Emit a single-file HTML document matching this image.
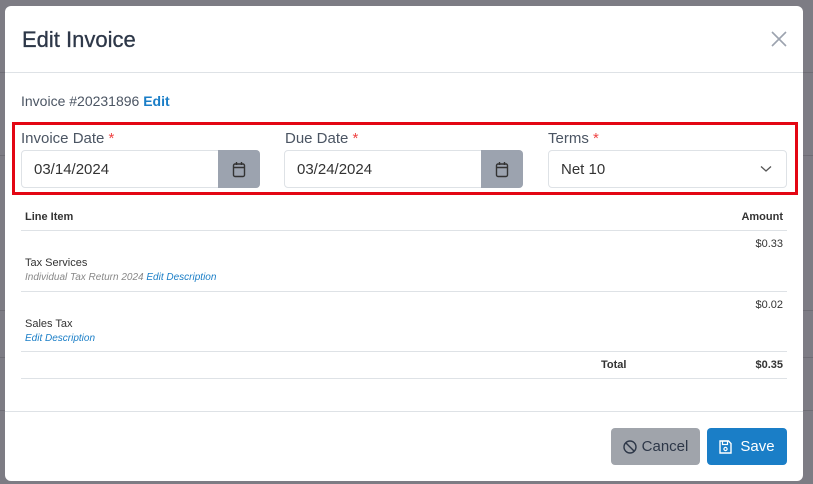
<!DOCTYPE html><html><head><style>
*{box-sizing:border-box;margin:0;padding:0}
body{width:813px;height:484px;background:#7d7c84;font-family:"Liberation Sans",sans-serif;position:relative;overflow:hidden;color:#333}
.bgl{position:absolute;left:0;right:0;height:1px;background:#6e6d75}
.m{position:absolute;left:5px;top:6px;width:798px;height:475px;background:#fff;border-radius:6px}
.a{position:absolute}
.lbl{font-size:15px;color:#4b5563}
.lbl b{color:#ef4444;font-weight:normal}
.in{position:absolute;top:144px;height:38px;border:1px solid #dee2e6;border-radius:4px;font-size:15px;color:#333;padding:10px 12px;background:#fff}
.cal{position:absolute;right:-1px;top:-1px;width:42px;height:38px;background:#9ca3af;border-radius:0 4px 4px 0;display:flex;align-items:center;justify-content:center}
.hr{position:absolute;left:16px;width:766px;height:1px;background:#dee2e6}
.s{font-size:11px}
.bl{color:#1a7ec7}
</style></head><body>
<div class="bgl" style="top:72px"></div><div class="bgl" style="top:155px"></div><div class="bgl" style="top:310px"></div><div class="bgl" style="top:357px"></div><div class="bgl" style="top:410px"></div>
<div class="m">
<div class="a" style="left:17px;top:21px;font-size:22px;color:#2d3748;-webkit-text-stroke:0.3px #2d3748">Edit Invoice</div>
<svg class="a" style="left:765px;top:24px" width="18" height="18" viewBox="0 0 18 18"><path d="M2 2L16 16M16 2L2 16" stroke="#9ca3af" stroke-width="1.6"/></svg>
<div class="a" style="left:0;right:0;top:66px;height:1px;background:#dee2e6"></div>
<div class="a" style="left:16px;top:87px;font-size:14px;color:#4b5563">Invoice #20231896 <span class="bl" style="font-weight:bold">Edit</span></div>
<div class="a" style="left:7px;top:116px;width:786px;height:73px;border:3px solid #e30613"></div>
<div class="a lbl" style="left:16px;top:124px">Invoice Date <b>*</b></div>
<div class="a lbl" style="left:280px;top:124px">Due Date <b>*</b></div>
<div class="a lbl" style="left:543px;top:124px">Terms <b>*</b></div>
<div class="in" style="left:16px;width:239px">03/14/2024<div class="cal"><svg width="14" height="17" viewBox="0 0 14 17"><rect x="1.5" y="3" width="11" height="12.5" rx="1.5" fill="none" stroke="#333" stroke-width="1.4"/><path d="M1.5 6.5H12.5M4.5 1V4M9.5 1V4" stroke="#333" stroke-width="1.4"/></svg></div></div>
<div class="in" style="left:279px;width:239px">03/24/2024<div class="cal"><svg width="14" height="17" viewBox="0 0 14 17"><rect x="1.5" y="3" width="11" height="12.5" rx="1.5" fill="none" stroke="#333" stroke-width="1.4"/><path d="M1.5 6.5H12.5M4.5 1V4M9.5 1V4" stroke="#333" stroke-width="1.4"/></svg></div></div>
<div class="in" style="left:543px;width:239px">Net 10<svg class="a" style="right:14px;top:14px" width="12" height="8" viewBox="0 0 12 8"><path d="M1 1.5L6 6L11 1.5" fill="none" stroke="#555" stroke-width="1.3"/></svg></div>
<div class="a s" style="left:20px;top:205px;font-weight:bold">Line Item</div>
<div class="a s" style="right:20px;top:205px;font-weight:bold">Amount</div>
<div class="hr" style="top:224px"></div>
<div class="a s" style="right:20px;top:232px">$0.33</div>
<div class="a s" style="left:20px;top:251px">Tax Services</div>
<div class="a" style="left:20px;top:266px;font-size:10px;font-style:italic;color:#888">Individual Tax Return 2024 <span class="bl">Edit Description</span></div>
<div class="hr" style="top:285px"></div>
<div class="a s" style="right:20px;top:293px">$0.02</div>
<div class="a s" style="left:20px;top:312px">Sales Tax</div>
<div class="a bl" style="left:20px;top:327px;font-size:10px;font-style:italic">Edit Description</div>
<div class="hr" style="top:345px"></div>
<div class="a s" style="left:596px;top:353px;font-weight:bold">Total</div>
<div class="a s" style="right:20px;top:353px;font-weight:bold">$0.35</div>
<div class="hr" style="top:372px"></div>
<div class="a" style="left:0;right:0;top:405px;height:1px;background:#dee2e6"></div>
<div class="a" style="left:606px;top:422px;width:89px;height:37px;background:#a0a4ab;border-radius:4px;color:#2d3748;font-size:15px;display:flex;align-items:center;justify-content:center;gap:5px"><svg width="14" height="14" viewBox="0 0 14 14"><circle cx="7" cy="7" r="6" fill="none" stroke="#2d3748" stroke-width="1.4"/><path d="M3 3L11 11" stroke="#2d3748" stroke-width="1.4"/></svg>Cancel</div>
<div class="a" style="left:702px;top:422px;width:80px;height:37px;background:#1a7ec7;border-radius:4px;color:#fff;font-size:15px;display:flex;align-items:center;justify-content:center;gap:8px"><svg width="13" height="14" viewBox="0 0 13 14"><path d="M1 1H9.5L12 3.5V13H1Z" fill="none" stroke="#fff" stroke-width="1.4"/><rect x="3.5" y="1" width="5" height="3.5" fill="none" stroke="#fff" stroke-width="1.2"/><circle cx="6.5" cy="9" r="1.6" fill="none" stroke="#fff" stroke-width="1.2"/></svg>Save</div>
</div>
</body></html>
